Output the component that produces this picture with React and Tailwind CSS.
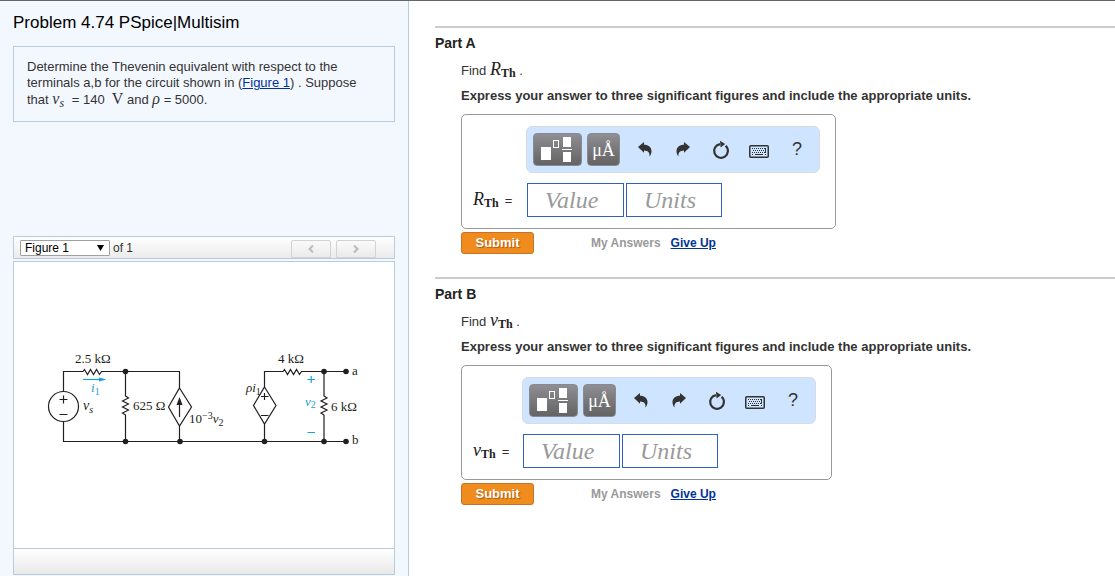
import { useState } from 'react';

function UndoIcon({ className }) {
  return (
    <svg width="14" height="15" viewBox="0 0 14 15" className={className}>
      <path
        d="M0 5 L6 0 V2.8 C10.5 2.8 13.5 5.3 13.5 9.3 C13.5 11.5 12.7 13.5 11.3 14.5 C12.2 11 10.4 8.6 6 8.4 V10.8 Z"
        fill="#333"
      />
    </svg>
  );
}

function ResetIcon() {
  return (
    <svg width="18" height="20" viewBox="0 0 18 20">
      <path d="M13.6 5.8 A6.9 6.9 0 1 1 8 4.1" fill="none" stroke="#333" strokeWidth="2.2" />
      <path d="M8 0.8 L13.2 4 L8.6 7.6 Z" fill="#333" />
    </svg>
  );
}

function KeyboardIcon() {
  return (
    <svg width="20" height="13" viewBox="0 0 20 13">
      <rect x="0.75" y="0.75" width="18.5" height="11.5" rx="1" fill="none" stroke="#333" strokeWidth="1.5" />
      <path d="M3 3.5 H17" stroke="#333" strokeDasharray="1 1" />
      <path d="M4 5.5 H16" stroke="#333" strokeDasharray="1 1" />
      <path d="M3 7.5 H17" stroke="#333" strokeDasharray="1 1" />
      <path d="M16.5 3 V8" stroke="#333" />
      <path d="M3 9.5 H4 M6 9.5 H14 M16 9.5 H17" stroke="#333" />
    </svg>
  );
}

function TemplateIcon() {
  return (
    <svg width="34" height="26" viewBox="0 0 34 26" fill="#fff">
      <rect x="0" y="10" width="10" height="13" />
      <rect x="12.5" y="3.5" width="5" height="7" fill="none" stroke="#fff" />
      <rect x="22" y="0" width="8" height="10" />
      <rect x="21" y="12" width="10" height="1" />
      <rect x="22" y="15" width="8" height="10" />
    </svg>
  );
}

function Circuit() {
  return (
    <svg width="380" height="286" viewBox="14 262 380 286" className="block" role="img" aria-label="Circuit diagram">
      <g fill="none" stroke="#231f20" strokeWidth="1.2">
        <path d="M63.5 391 V371.5 H83 l1.5 -2 3 5 3 -5 3 5 3 -5 3 5 2 -3 H179.5 V388" />
        <path d="M63.5 421.5 V441.5 H346" />
        <circle cx="63.5" cy="406.5" r="15" />
        <path d="M59.5 399.5 H67.5 M63.5 395.5 V403.5 M59.5 414.5 H67.5" />
        <path d="M125.5 371.5 V396 l3 2 -6 3 6 3 -6 3 6 3 -6 3 3 2 V441.5" />
        <path d="M179.5 388 L191.5 407 L179.5 426 L168.5 407 Z M179.5 426 V441.5 M179.5 417 V402" />
        <path d="M264.5 387 V371.5 H283 l1.5 -2 3 5 3 -5 3 5 3 -5 3 5 2 -3 H346" />
        <path d="M264.5 387 L276 405.5 L264.5 424 L253.5 405.5 Z M264.5 424 V441.5" />
        <path d="M261 396.5 H268.5 M264.5 393 V400 M261 415.5 H268.5" />
        <path d="M324 371.5 V396 l3 2 -6 3 6 3 -6 3 6 3 -6 3 3 2 V441.5" />
      </g>
      <g fill="#231f20">
        <circle cx="125.5" cy="371.5" r="2.8" />
        <circle cx="125.5" cy="441.5" r="2.8" />
        <circle cx="180" cy="441.5" r="2.8" />
        <circle cx="264.5" cy="441.5" r="2.8" />
        <circle cx="324" cy="371.5" r="2.8" />
        <circle cx="324" cy="441.5" r="2.8" />
        <circle cx="346" cy="371.5" r="2.8" />
        <circle cx="346" cy="441.5" r="2.8" />
        <path d="M179.5 397 L182.5 405 H176.5 Z" />
      </g>
      <g stroke="#1a9fd9" strokeWidth="1.2" fill="#1a9fd9">
        <path d="M83 379.5 H100" />
        <path d="M99 377.5 L106.5 379.5 L99 381.5 Z" stroke="none" />
        <path d="M307.5 379.5 H315 M311.2 376 V383 M307.5 432.5 H315" />
      </g>
      <g fill="#231f20" fontSize="13" fontFamily="Liberation Serif, serif">
        <text x="75" y="363">2.5 kΩ</text>
        <text x="278" y="363">4 kΩ</text>
        <text x="133" y="410">625 Ω</text>
        <text x="331" y="411">6 kΩ</text>
        <text x="352" y="375">a</text>
        <text x="352" y="444">b</text>
        <text x="83" y="410" fontStyle="italic" fontSize="14">v<tspan fontSize="10" dy="3">s</tspan></text>
        <text x="189" y="423">10<tspan fontSize="10" dy="-4">−3</tspan><tspan dy="4" fontStyle="italic">v</tspan><tspan fontSize="10" dy="3">2</tspan></text>
        <text x="246" y="392" fontStyle="italic">ρi<tspan fontSize="10" dy="3" fontStyle="normal">1</tspan></text>
        <text x="91" y="392" fill="#1a9fd9" fontStyle="italic">i<tspan fontSize="10" dy="3" fontStyle="normal">1</tspan></text>
        <text x="305" y="406" fill="#1a9fd9" fontStyle="italic">v<tspan fontSize="10" dy="2" fontStyle="normal">2</tspan></text>
      </g>
    </svg>
  );
}

function Symbol({ name }) {
  return (
    <span className="font-['Liberation_Serif',serif] text-[18px] leading-none text-[#222]">
      <i>{name}</i>
      <span className="relative top-[2px] text-[12px] font-bold">Th</span>
    </span>
  );
}

function FigureBar() {
  const [figure, setFigure] = useState('1');

  return (
    <div className="flex h-[23px] items-start border border-[#b8ccde] bg-gradient-to-b from-white to-[#ebebeb] pt-[3px] pl-[6px] pr-[18px]">
      <div className="relative">
        <select
          id="figure"
          value={figure}
          onChange={(e) => setFigure(e.target.value)}
          className="block h-4 w-[90px] appearance-none rounded-[1px] border border-[#a0a0a0] bg-white pl-1 text-[12px] leading-[14px] text-black"
        >
          <option value="1">Figure 1</option>
        </select>
        <svg width="7" height="6" viewBox="0 0 7 6" className="pointer-events-none absolute top-[5px] right-[6px]">
          <path d="M0 0 H7 L3.5 6 Z" />
        </svg>
      </div>
      <label htmlFor="figure" className="ml-[3px] text-[12px] leading-4">of 1</label>
      <div className="ml-auto flex gap-[5px]">
        <button aria-label="Previous figure" className="flex h-[18px] w-10 items-center justify-center rounded-t-[2px] border border-[#d3d3d3] bg-gradient-to-b from-[#fafafa] to-[#ebebeb]">
          <svg width="6" height="8" viewBox="0 0 6 8"><path d="M5 0.5 L1.5 4 L5 7.5" fill="none" stroke="#bbb" strokeWidth="2" /></svg>
        </button>
        <button aria-label="Next figure" className="flex h-[18px] w-10 items-center justify-center rounded-t-[2px] border border-[#d3d3d3] bg-gradient-to-b from-[#fafafa] to-[#ebebeb]">
          <svg width="6" height="8" viewBox="0 0 6 8"><path d="M1 0.5 L4.5 4 L1 7.5" fill="none" stroke="#bbb" strokeWidth="2" /></svg>
        </button>
      </div>
    </div>
  );
}

function Toolbar() {
  return (
    <div className="flex h-[47px] w-[294px] items-center rounded-[6px] border border-[#d8dce2] bg-[#cfe5ff] pl-[6px]">
      <button aria-label="Templates" className="flex h-[33px] w-[49px] items-center justify-center rounded-[4px] border border-[#8a8a8e] bg-gradient-to-b from-[#8e8e94] to-[#646464]">
        <TemplateIcon />
      </button>
      <button aria-label="Symbols" className="ml-[5px] h-[33px] w-[33px] rounded-[4px] border border-[#8a8a8e] bg-gradient-to-b from-[#8e8e94] to-[#646464] font-['Liberation_Serif',serif] text-[18px] leading-[33px] text-white">
        <span className="flex justify-center">μÅ</span>
      </button>
      <div className="ml-[6px] flex">
        <button aria-label="Undo" className="flex h-[33px] w-[38px] items-center justify-center"><UndoIcon /></button>
        <button aria-label="Redo" className="flex h-[33px] w-[38px] items-center justify-center"><UndoIcon className="-scale-x-100" /></button>
        <button aria-label="Reset" className="flex h-[33px] w-[38px] items-center justify-center"><ResetIcon /></button>
        <button aria-label="Keyboard" className="flex h-[33px] w-[38px] items-center justify-center pt-1"><KeyboardIcon /></button>
        <button aria-label="Help" className="h-[33px] w-[38px] text-[18px] leading-[33px] text-[#333]">?</button>
      </div>
    </div>
  );
}

function Part({ letter, symbol, labelClass }) {
  const inputClass =
    "h-[34px] rounded-none border border-[#2f62c4] bg-white pl-[17px] font-['Liberation_Serif',serif] text-[24px] italic text-[#333] placeholder:text-[#999] focus:outline-none";

  return (
    <section className="border-t-2 border-[#ccc] pt-[5px] pb-[23px]">
      <h2 className="text-[14px] leading-5 font-bold text-[#222]">Part {letter}</h2>
      <div className="pl-[26px]">
        <p className="mt-[7px] h-5 leading-5">Find <Symbol name={symbol} /> .</p>
        <p className="mt-2 leading-4 font-bold">
          Express your answer to three significant figures and include the appropriate units.
        </p>
        <div className="mt-[10px] w-fit rounded-[5px] border border-[#999] pt-[11px] pr-[15px] pb-[11px] pl-[11px]">
          <div className="flex">
            <div className={labelClass} />
            <Toolbar />
          </div>
          <div className="mt-[10px] flex items-center">
            <label htmlFor={`value-${letter}`} className={labelClass}>
              <Symbol name={symbol} />
              <span className="ml-[6px]">=</span>
            </label>
            <div className="ml-px flex gap-[2px]">
              <input id={`value-${letter}`} placeholder="Value" className={`${inputClass} w-[97px]`} />
              <input aria-label="Units" placeholder="Units" className={`${inputClass} w-[96px]`} />
            </div>
          </div>
        </div>
        <div className="mt-[3px] flex items-center text-[12px]">
          <button className="h-[22px] w-[73px] rounded-[3px] border border-[#c8732a] bg-[#f08c1e] text-[13px] leading-5 font-bold text-white [text-shadow:1px_1px_1px_#a85a10]">
            Submit
          </button>
          <a href="#answers" className="ml-[57px] font-bold text-[#999]">My Answers</a>
          <a href="#give-up" className="ml-[10px] font-bold text-[#003399] underline">Give Up</a>
        </div>
      </div>
    </section>
  );
}

export default function App() {
  return (
    <div className="flex min-h-screen border-t border-[#666] bg-white font-['Liberation_Sans',Arial,sans-serif] text-[13px] text-[#333]">
      <aside className="w-[409px] shrink-0 border-r border-[#b8ccde] bg-[#f3f8ff] pr-[13px] pl-[13px]">
        <h1 className="pt-3 text-[17px] leading-5 text-black">Problem 4.74 PSpice|Multisim</h1>
        <div className="mt-[13px] h-[76px] border border-[#b8ccde] px-[13px] pt-3 leading-4">
          <p>
            Determine the Thevenin equivalent with respect to the
            <br />
            terminals a,b for the circuit shown in (
            <a href="#figure" className="text-[#003399] underline">Figure 1</a>) . Suppose
            <br />
            that{' '}
            <span className="mr-1 font-['Liberation_Serif',serif] text-[16px] leading-none italic">
              v<sub className="text-[12px]">s</sub>
            </span>{' '}
            = 140 &nbsp;
            <span className="font-['Liberation_Serif',serif] text-[16px] leading-none">V</span> and{' '}
            <span className="font-['Liberation_Serif',serif] text-[16px] leading-none italic">ρ</span> = 5000.
          </p>
        </div>
        <div className="mt-[114px]">
          <FigureBar />
          <div className="mt-[2px] border border-[#b8ccde] bg-white">
            <Circuit />
            <div className="h-[26px] border-t border-[#b8ccde] bg-gradient-to-b from-white to-[#e8e8e8]" />
          </div>
        </div>
      </aside>
      <main className="min-w-0 flex-1 pt-[25px] pl-[26px]">
        <Part letter="A" symbol="R" labelClass="w-[53px] shrink-0" />
        <Part letter="B" symbol="v" labelClass="w-[49px] shrink-0" />
      </main>
    </div>
  );
}
